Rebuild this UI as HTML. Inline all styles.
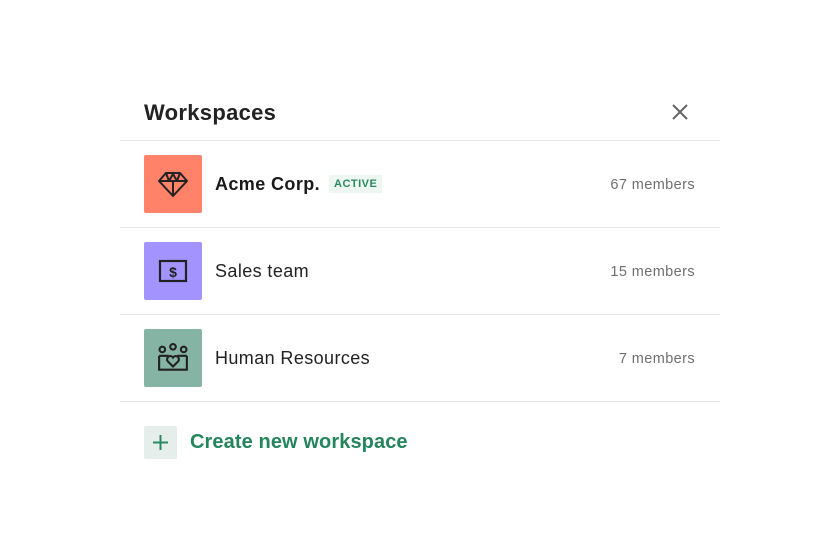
<!DOCTYPE html>
<html><head><style>
*{margin:0;padding:0;box-sizing:border-box}
body{width:840px;height:552px;background:#fff;font-family:"Liberation Sans",sans-serif;position:relative;color:#222}
.abs{position:absolute}
.hr{position:absolute;left:120px;width:600px;height:1px;background:#e6e6e6}
.tile{position:absolute;left:144px;width:58px;height:58px;border-radius:2px;display:flex;align-items:center;justify-content:center}
.name{position:absolute;left:215px;font-size:18px;color:#222;letter-spacing:.4px}
.mem{position:absolute;right:145px;font-size:14.5px;color:#6f6f6f;letter-spacing:.4px}
</style></head><body>
<div class="abs" style="left:144px;top:100px;font-size:22px;font-weight:bold;color:#222;letter-spacing:.3px">Workspaces</div>
<svg class="abs" style="left:671px;top:103px" width="18" height="18" viewBox="0 0 18 18"><path d="M2 2L16 16M16 2L2 16" stroke="#666" stroke-width="2"/></svg>
<div class="hr" style="top:140px"></div>
<div class="tile" style="top:155px;background:#ff8269"><svg width="30" height="30" viewBox="0 0 30 30" fill="none" stroke="#222" stroke-width="2" stroke-linejoin="round"><path d="M8 4H22L29 12L15 27L1 12Z M1 12H29 M15 12V27 M8 4L11 12 M22 4L19 12 M11 12L15 5L19 12"/></svg></div>
<div class="name" style="top:174px;font-weight:bold;font-size:18px;color:#1a1a1a">Acme Corp.</div>
<div class="abs" style="left:329px;top:175px;height:18px;padding:0 5px;background:#eef6f1;color:#2a8a5f;font-size:11px;font-weight:bold;line-height:18px;letter-spacing:.5px">ACTIVE</div>
<div class="mem" style="top:177px">67 members</div>
<div class="hr" style="top:227px"></div>
<div class="tile" style="top:242px;background:#a393ff"><svg width="30" height="30" viewBox="0 0 30 30" fill="none" stroke="#222" stroke-width="2.2"><rect x="2" y="5" width="26" height="20"/><text x="15" y="21" font-size="14" font-weight="bold" text-anchor="middle" fill="#222" stroke="none" font-family="Liberation Sans">$</text></svg></div>
<div class="name" style="top:261px">Sales team</div>
<div class="mem" style="top:264px">15 members</div>
<div class="hr" style="top:314px"></div>
<div class="tile" style="top:329px;background:#86b4a4"><svg width="32" height="32" viewBox="0 0 30 30" fill="none" stroke="#222" stroke-width="2"><circle cx="5" cy="7" r="2.6"/><circle cx="15" cy="4.5" r="2.6"/><circle cx="25" cy="7" r="2.6"/><path d="M2 13H11 M19 13H28 M2 13V26H28V13"/><path d="M15 23L10 18A2.8 2.8 0 0 1 15 14.5A2.8 2.8 0 0 1 20 18Z"/></svg></div>
<div class="name" style="top:348px">Human Resources</div>
<div class="mem" style="top:351px">7 members</div>
<div class="hr" style="top:401px"></div>
<div class="abs" style="left:144px;top:426px;width:33px;height:33px;background:#e6eeec;border-radius:2px"><svg width="33" height="33" viewBox="0 0 33 33"><path d="M16.5 9V24M9 16.5H24" stroke="#2a8a5f" stroke-width="2"/></svg></div>
<div class="abs" style="left:190px;top:431px;font-size:20px;font-weight:bold;color:#24855c;letter-spacing:.1px">Create new workspace</div>
</body></html>
